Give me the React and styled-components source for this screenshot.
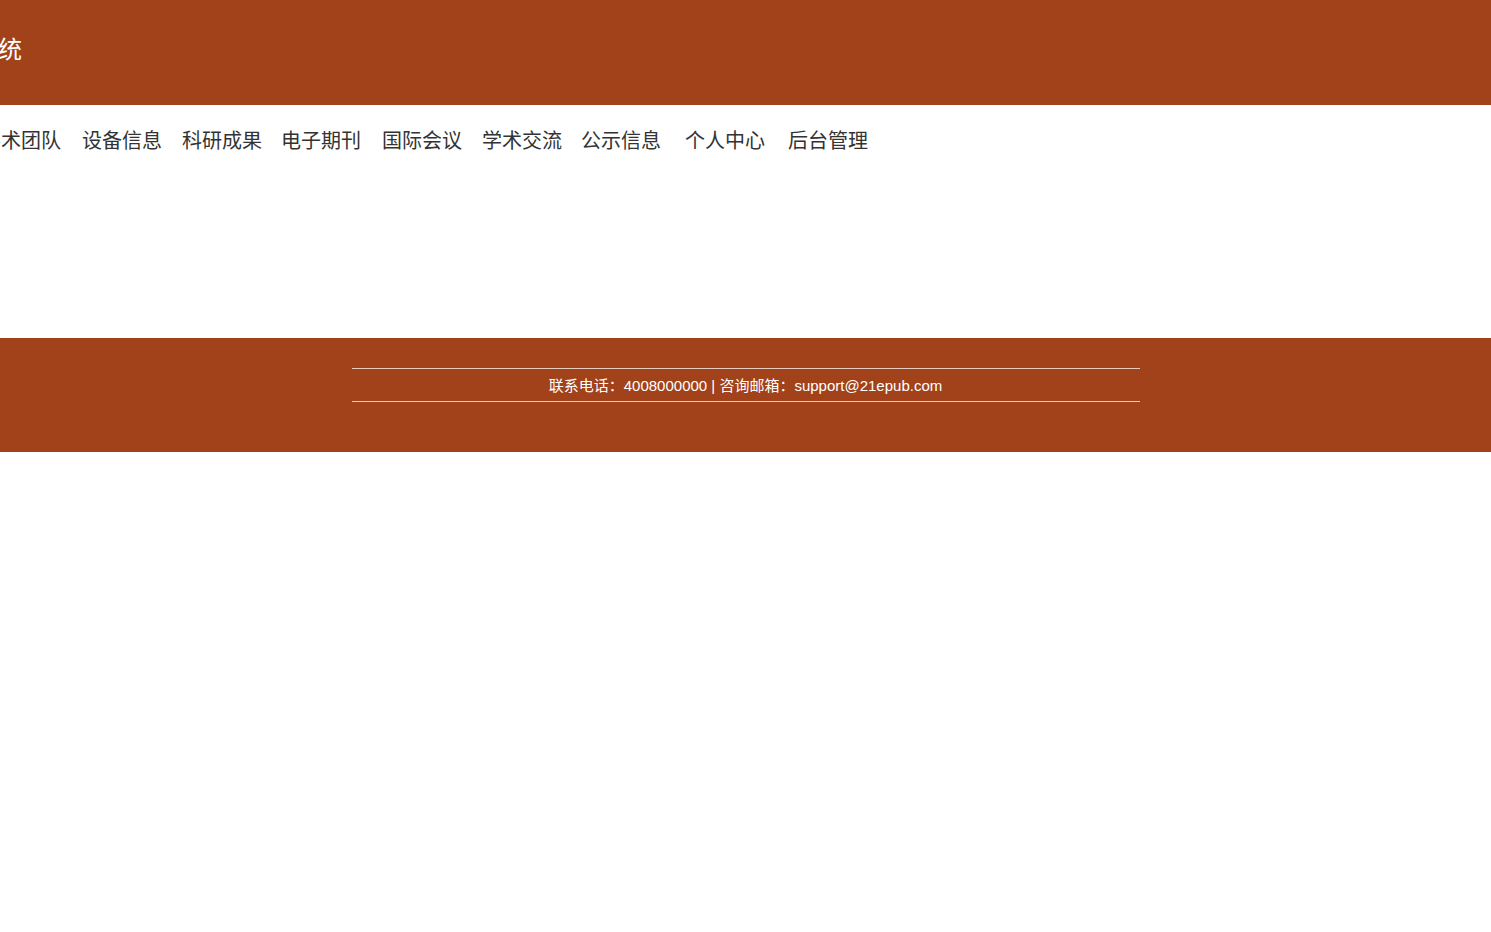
import React from "react";
import styled, { createGlobalStyle } from "styled-components";

const Global = createGlobalStyle`
  html, body { margin: 0; padding: 0; background: #fff; overflow-x: hidden; }
  body { font-family: "Microsoft YaHei", "Noto Sans CJK SC", "Liberation Sans", sans-serif; }
  * { box-sizing: border-box; }
`;

const Page = styled.div`
  width: 1491px;
  overflow: hidden;
`;

const Header = styled.header`
  height: 105px;
  background: #a1421b;
  display: flex;
  align-items: center;
  overflow: hidden;
`;

const Title = styled.h1`
  margin: 0 0 10px -170px;
  font-size: 24px;
  font-weight: normal;
  color: #fff;
  white-space: nowrap;
  font-family: "Noto Sans CJK SC", sans-serif;
`;

const Main = styled.main`
  height: 233px;
  overflow: hidden;
`;

const Nav = styled.nav`
  display: flex;
  height: 68px;
  align-items: center;
  margin-left: -119px;
`;

const NavItem = styled.a`
  font-size: 20px;
  color: #333;
  text-decoration: none;
  white-space: nowrap;
  font-family: "Noto Sans CJK SC", sans-serif;
  margin-right: ${(p) => p.$gap || 20}px;
  width: 80px;
  text-align: left;
`;

const Footer = styled.footer`
  height: 114px;
  background: #a1421b;
  padding-top: 30px;
  display: flex;
  justify-content: center;
`;

const FooterInner = styled.div`
  width: 788px;
  height: 34px;
  padding-bottom: 2px;
  border-top: 1px solid #e6cbbf;
  border-bottom: 1px solid #e6cbbf;
  display: flex;
  align-items: center;
  justify-content: center;
  color: #fff;
  font-size: 15px;
  font-family: "Liberation Sans", "Noto Sans CJK SC", sans-serif;
`;

const items = [
  ["科研首页", 20],
  ["学术团队", 21],
  ["设备信息", 20],
  ["科研成果", 19],
  ["电子期刊", 21],
  ["国际会议", 20],
  ["学术交流", 19],
  ["公示信息", 24],
  ["个人中心", 23],
  ["后台管理", 20],
];

export default function App() {
  return (
    <Page>
      <Global />
      <Header>
        <Title>科研管理信息系统</Title>
      </Header>
      <Main>
        <Nav>
          {items.map(([t, g]) => (
            <NavItem key={t} href="#" $gap={g}>
              {t}
            </NavItem>
          ))}
        </Nav>
      </Main>
      <Footer>
        <FooterInner>联系电话：4008000000 | 咨询邮箱：support@21epub.com</FooterInner>
      </Footer>
    </Page>
  );
}
